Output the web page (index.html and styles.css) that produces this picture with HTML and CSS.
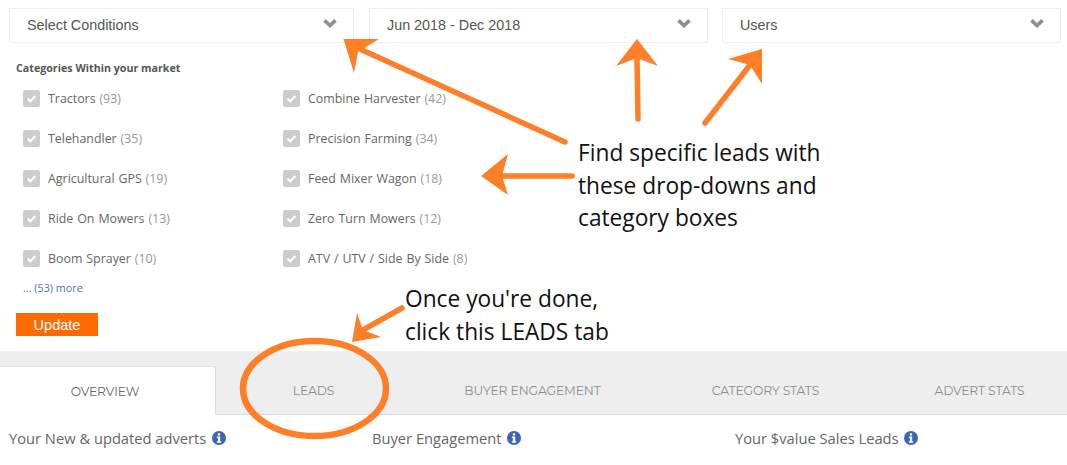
FILE: index.html
```html
<!DOCTYPE html>
<html lang="en">
<head>
<meta charset="utf-8">
<title>Leads filters</title>
<link rel="stylesheet" href="styles.css">
</head>
<body>
<div class="page">
  <div class="filters">
    <div class="select select-wide"><span>Select Conditions</span><svg class="chev" viewBox="0 0 14 10"><path d="M1.5 2.4 7 7.6l5.5-5.2" /></svg></div>
    <div class="select"><span>Jun 2018 - Dec 2018</span><svg class="chev" viewBox="0 0 14 10"><path d="M1.5 2.4 7 7.6l5.5-5.2" /></svg></div>
    <div class="select"><span>Users</span><svg class="chev" viewBox="0 0 14 10"><path d="M1.5 2.4 7 7.6l5.5-5.2" /></svg></div>
  </div>
  <h4 class="cat-title">Categories Within your market</h4>
  <div class="cats">
    <label class="cat"><svg class="check" viewBox="0 0 17 17"><rect width="17" height="17" rx="2.5"/><path d="M4.6 8.6l2.8 2.7 5-5.2"/></svg><span>Tractors <em>(93)</em></span></label>
    <label class="cat"><svg class="check" viewBox="0 0 17 17"><rect width="17" height="17" rx="2.5"/><path d="M4.6 8.6l2.8 2.7 5-5.2"/></svg><span>Combine Harvester <em>(42)</em></span></label>
    <label class="cat"><svg class="check" viewBox="0 0 17 17"><rect width="17" height="17" rx="2.5"/><path d="M4.6 8.6l2.8 2.7 5-5.2"/></svg><span>Telehandler <em>(35)</em></span></label>
    <label class="cat"><svg class="check" viewBox="0 0 17 17"><rect width="17" height="17" rx="2.5"/><path d="M4.6 8.6l2.8 2.7 5-5.2"/></svg><span>Precision Farming <em>(34)</em></span></label>
    <label class="cat"><svg class="check" viewBox="0 0 17 17"><rect width="17" height="17" rx="2.5"/><path d="M4.6 8.6l2.8 2.7 5-5.2"/></svg><span>Agricultural GPS <em>(19)</em></span></label>
    <label class="cat"><svg class="check" viewBox="0 0 17 17"><rect width="17" height="17" rx="2.5"/><path d="M4.6 8.6l2.8 2.7 5-5.2"/></svg><span>Feed Mixer Wagon <em>(18)</em></span></label>
    <label class="cat"><svg class="check" viewBox="0 0 17 17"><rect width="17" height="17" rx="2.5"/><path d="M4.6 8.6l2.8 2.7 5-5.2"/></svg><span>Ride On Mowers <em>(13)</em></span></label>
    <label class="cat"><svg class="check" viewBox="0 0 17 17"><rect width="17" height="17" rx="2.5"/><path d="M4.6 8.6l2.8 2.7 5-5.2"/></svg><span>Zero Turn Mowers <em>(12)</em></span></label>
    <label class="cat"><svg class="check" viewBox="0 0 17 17"><rect width="17" height="17" rx="2.5"/><path d="M4.6 8.6l2.8 2.7 5-5.2"/></svg><span>Boom Sprayer <em>(10)</em></span></label>
    <label class="cat"><svg class="check" viewBox="0 0 17 17"><rect width="17" height="17" rx="2.5"/><path d="M4.6 8.6l2.8 2.7 5-5.2"/></svg><span>ATV / UTV / Side By Side <em>(8)</em></span></label>
  </div>
  <a class="more">... (53) more</a>
  <div class="update-row"><button class="update">Update</button></div>
  <nav class="tabs">
    <div class="tab tab-active">OVERVIEW</div>
    <div class="tab tab-leads">LEADS</div>
    <div class="tab tab-buyer">BUYER ENGAGEMENT</div>
    <div class="tab tab-cat">CATEGORY STATS</div>
    <div class="tab tab-advert">ADVERT STATS</div>
  </nav>
  <div class="panels">
    <div class="panel">Your New &amp; updated adverts <svg class="info" viewBox="0 0 14 14"><circle cx="7" cy="7" r="7"/><rect x="5.9" y="2.3" width="2.3" height="2.2" rx=".4"/><path d="M4.9 5.6h3.3v4.7h1v1.4H4.9v-1.4h1V7h-1z"/></svg></div>
    <div class="panel">Buyer Engagement <svg class="info" viewBox="0 0 14 14"><circle cx="7" cy="7" r="7"/><rect x="5.9" y="2.3" width="2.3" height="2.2" rx=".4"/><path d="M4.9 5.6h3.3v4.7h1v1.4H4.9v-1.4h1V7h-1z"/></svg></div>
    <div class="panel">Your $value Sales Leads <svg class="info" viewBox="0 0 14 14"><circle cx="7" cy="7" r="7"/><rect x="5.9" y="2.3" width="2.3" height="2.2" rx=".4"/><path d="M4.9 5.6h3.3v4.7h1v1.4H4.9v-1.4h1V7h-1z"/></svg></div>
  </div>

  <svg class="annot" viewBox="0 0 1067 465" aria-hidden="true">
    <path class="ln" d="M565 142 362 50"/>
    <path class="ln" d="M638 119 637 58"/>
    <path class="ln" d="M705 123 750 65"/>
    <path class="ln" d="M572 176 502 176"/>
    <path class="ln" d="M402 308 363 330"/>
    <polygon class="head" points="343.5,39 379,39 358,52 354,73"/>
    <polygon class="head" points="637,39 658,66 637,58 616,66"/>
    <polygon class="head" points="762,49 728,59 750,65 762,84"/>
    <polygon class="head" points="481,176 508,154 502,176 508,195"/>
    <polygon class="head" points="352,342 357,313 363,330 381,337"/>
    <ellipse class="ring" cx="314.5" cy="388.5" rx="71.5" ry="47.5"/>
  </svg>
  <p class="note note-find">Find specific leads with<br>these drop-downs and<br>category boxes</p>
  <p class="note note-once">Once you're done,<br>click this LEADS tab</p>
</div>
</body>
</html>
```

FILE: styles.css
```css
* { box-sizing: border-box; }
html, body { margin: 0; padding: 0; background: #fff; }
.page {
  position: relative;
  width: 1067px;
  height: 465px;
  overflow: hidden;
  font-family: "Open Sans", "Liberation Sans", sans-serif;
  color: #555;
}
.filters {
  display: flex;
  gap: 14px;
  padding: 8px 6px 0 9px;
}
.select {
  flex: 0 0 339px;
  height: 35px;
  border: 1px solid #eee;
  display: flex;
  justify-content: space-between;
  padding: 0 16px 2px 17px;
  align-items: center;
  font: 14.35px "Liberation Sans", Arial, sans-serif;
  color: #555;
}
.select-wide { flex-basis: 345px; margin-right: 1px; }
.chev {
  width: 14px;
  height: 10px;
  align-self: flex-start;
  margin-top: 9px;
  fill: none;
  stroke: #8f8f8f;
  stroke-width: 3.6;
}
.cat-title {
  margin: 18px 0 0 16px;
  font-size: 10.7px;
  line-height: 14px;
  font-weight: 700;
  color: #555;
}
.cats {
  display: grid;
  grid-template-columns: 260px 260px;
  grid-auto-rows: 40px;
  margin: 0 0 0 23px;
  padding-top: 15px;
}
.cat {
  display: flex;
  align-items: flex-start;
  gap: 8px;
  font-size: 12.4px;
  word-spacing: .7px;
  line-height: 17px;
  color: #666;
}
.cat em { font-style: normal; color: #999; }
.check { width: 17px; height: 17px; flex: none; }
.check rect { fill: #ccc; }
.check path { fill: none; stroke: #fff; stroke-width: 2.2; }
.more {
  display: block;
  margin: -9px 0 0 23px;
  font-size: 10.8px;
  line-height: 14px;
  color: #4d7a9c;
}
.update-row { padding: 18px 0 0 16px; }
.update {
  display: block;
  width: 82px;
  height: 23px;
  padding: 0;
  border: 0;
  background: #ff6a00;
  color: #fff;
  font: 14.5px "Liberation Sans", Arial, sans-serif;
}
.tabs {
  margin-top: 15px;
  height: 64px;
  background: #eee;
  border-bottom: 1px solid #ddd;
  display: flex;
  align-items: flex-end;
  font-family: Montserrat, Inter, "Liberation Sans", sans-serif;
  font-size: 12.3px;
  color: #8d8d8d;
}
.tab {
  height: 48px;
  display: flex;
  align-items: center;
  justify-content: center;
  letter-spacing: -.1px;
}
.tab-active {
  flex: 0 0 216px;
  padding-right: 5px;
  margin-bottom: -1px;
  height: 49px;
  background: #fff;
  border-top: 1px solid #e2e2e2;
  border-right: 1px solid #ddd;
  border-top-right-radius: 3px;
  color: #666;
}
.tab-leads { flex: 0 0 195px; }
.tab-buyer { flex: 0 0 243px; }
.tab-cat { flex: 0 0 223px; }
.tab-advert { flex: 0 0 205px; }
.panels {
  display: grid;
  grid-template-columns: repeat(3, 363px);
  padding: 13px 0 0 9px;
  font-size: 14.7px;
  line-height: 20px;
  color: #666;
}
.panel { white-space: nowrap; }
.info { width: 14px; height: 14px; vertical-align: -1px; margin-left: 2px; }
.info circle { fill: #3a66b5; }
.info rect, .info path { fill: #fff; }
.annot {
  position: absolute;
  left: 0;
  top: 0;
  width: 1067px;
  height: 465px;
}
.ln { fill: none; stroke: #fd7f28; stroke-width: 5.5; stroke-linecap: round; }
.head { fill: #fd7f28; }
.ring { fill: none; stroke: #fd7f28; stroke-width: 6.5; }
.note {
  position: absolute;
  margin: 0;
  font-family: "Open Sans", "Noto Sans", sans-serif;
  font-size: 24.5px;
  line-height: 32.5px;
  color: #111;
  white-space: nowrap;
  transform-origin: 0 0;
  transform: scaleX(.927);
}
.note-find { left: 578px; top: 136px; }
.note-once { left: 405px; top: 282px; }
```
